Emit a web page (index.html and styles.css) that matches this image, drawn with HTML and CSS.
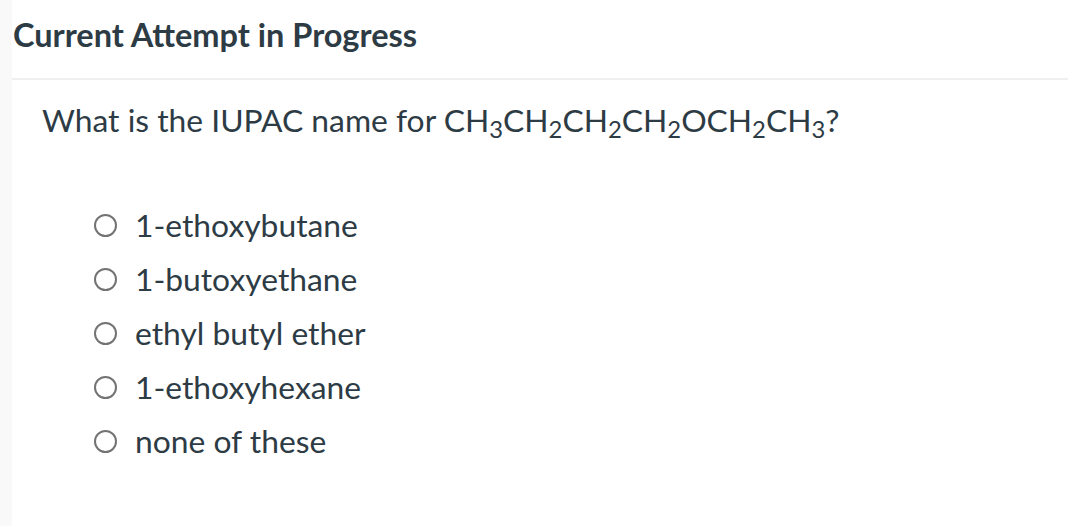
FILE: index.html
```html
<!DOCTYPE html>
<html lang="en">
<head>
    <meta charset="UTF-8">
    <title>Current Attempt in Progress</title>
    <link rel="stylesheet" href="styles.css">
</head>
<body>
    <div class="page">
        <div class="side-strip"></div>
        <div class="content">
            <div class="header">
                <h1 class="title">Current Attempt in Progress</h1>
            </div>

            <div class="question">
                What is the IUPAC name for CH<sub>3</sub>CH<sub>2</sub>CH<sub>2</sub>CH<sub>2</sub>OCH<sub>2</sub>CH<sub>3</sub>?
            </div>

            <ul class="answers">
                <li class="answer"><span class="radio"></span><span>1-ethoxybutane</span></li>
                <li class="answer"><span class="radio"></span><span>1-butoxyethane</span></li>
                <li class="answer"><span class="radio"></span><span>ethyl butyl ether</span></li>
                <li class="answer"><span class="radio"></span><span>1-ethoxyhexane</span></li>
                <li class="answer"><span class="radio"></span><span>none of these</span></li>
            </ul>
        </div>
    </div>
</body>
</html>
```

FILE: styles.css
```css
html, body {
    margin: 0;
    padding: 0;
    height: 100%;
}

body {
    font-family: Lato, "Open Sans", sans-serif;
    color: #2d3b45;
    background-color: #ffffff;
}

.page {
    display: flex;
    min-height: 100%;
}

.side-strip {
    width: 12px;
    flex-shrink: 0;
    background-color: #f9f9f9;
}

.content {
    flex-grow: 1;
}

.header {
    border-bottom: 2px solid #efefef;
    padding: 16px 0 24px 1px;
}

.title {
    margin: 0;
    font-size: 32.5px;
    font-weight: bold;
    line-height: 38px;
}

.question {
    margin: 20px 0 0 30px;
    font-size: 31.8px;
    line-height: 40px;
}

.question sub {
    font-size: 75%;
    line-height: 0;
    vertical-align: -6px;
}

.answers {
    list-style: none;
    margin: 58px 0 0 0;
    padding: 0 0 0 82px;
}

.answer {
    display: flex;
    align-items: center;
    gap: 18px;
    height: 54px;
    font-size: 31.8px;
}

.radio {
    width: 19px;
    height: 19px;
    border: 2px solid #737373;
    border-radius: 50%;
    flex-shrink: 0;
}
```
